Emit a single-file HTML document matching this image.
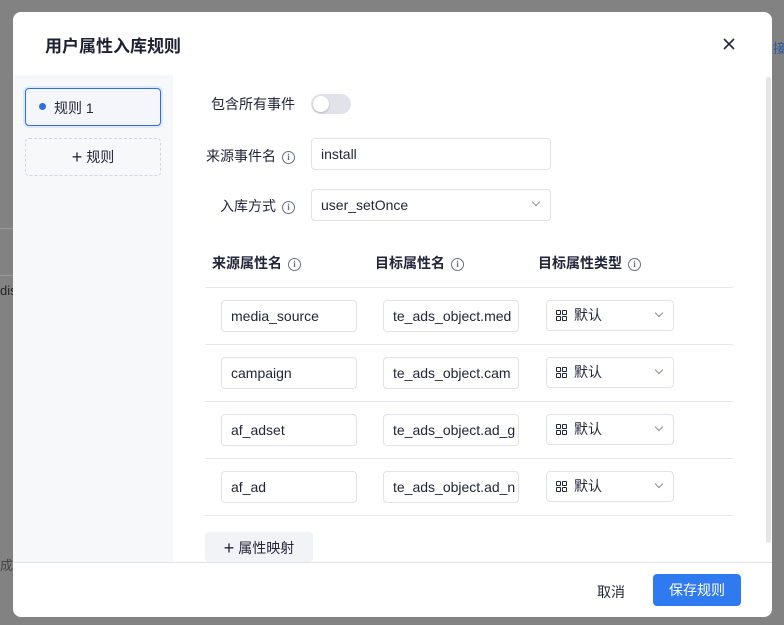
<!DOCTYPE html>
<html><head><meta charset="utf-8"><style>
*{box-sizing:border-box;margin:0;padding:0}
body{width:784px;height:625px;background:#828282;font-family:"Liberation Sans","Noto Sans CJK SC",sans-serif;position:relative;overflow:hidden;color:#23263a;font-size:14px}
.a{position:absolute}
.m{left:13px;top:12px;width:759px;height:605px;background:#fff;border-radius:8px;overflow:hidden}
.inp{position:absolute;border:1px solid #e2e3ea;border-radius:4px;background:#fff;height:32px;line-height:30px;padding-left:9px;font-size:14px;color:#23263a;white-space:nowrap;overflow:hidden}
.lbl{position:absolute;font-size:14px;color:#23263a;text-align:right}
.i{display:inline-block;width:13px;height:13px;border:1px solid #6b6e80;border-radius:50%;font-size:9px;line-height:11px;text-align:center;color:#6b6e80;vertical-align:1px;margin-left:6px;font-family:"Liberation Serif",serif;font-weight:bold}
.hr{position:absolute;left:205px;width:528px;height:1px;background:#e6e7ec}
.chev{position:absolute;right:11px;top:9px;width:6px;height:6px;border-right:1px solid #8a8d9c;border-bottom:1px solid #8a8d9c;transform:rotate(45deg)}
.grid{display:inline-block;width:11px;height:11px;margin-right:7px;vertical-align:-1px;position:relative}
.grid i{position:absolute;width:5px;height:5px;border:1.2px solid #23263a;border-radius:1px}
</style></head><body>
<div class="a" style="left:0;top:228px;width:13px;height:1px;background:#999"></div>
<div class="a" style="left:0;top:275px;width:13px;height:1px;background:#999"></div>
<div class="a" style="left:0;top:283px;font-size:13px;color:#222">dis</div>
<div class="a" style="left:0;top:555px;font-size:13px;color:#444">成</div>
<div class="a" style="left:773px;top:38px;font-size:13px;color:#2a5aa8">接</div>
<div class="a m">
 <div class="a" style="left:32px;top:20px;font-size:17px;font-weight:bold;color:#1d2033">用户属性入库规则</div>
 <svg class="a" style="left:710px;top:26px" width="12" height="12" viewBox="0 0 12 12"><path d="M1 1L11 11M11 1L1 11" stroke="#23263a" stroke-width="1.6"/></svg>
 <div class="a" style="left:0;top:63px;width:160px;height:487px;background:#f7f8fa"></div>
 <div class="a" style="left:12px;top:76px;width:136px;height:38px;border:1px solid #2f6fe0;border-radius:4px;background:#f4f6fb;box-shadow:0 0 0 2px #dfe8fa"></div>
 <div class="a" style="left:26px;top:91px;width:7px;height:7px;border-radius:50%;background:#2f6fe0"></div>
 <div class="a" style="left:41px;top:86px;font-size:14px">规则 1</div>
 <div class="a" style="left:12px;top:126px;width:136px;height:38px;border:1px dashed #d4d6de;border-radius:4px;text-align:center;line-height:36px;font-size:14px"><span style="font-size:18px;vertical-align:-1px">+</span> 规则</div>
 <div class="lbl" style="left:150px;top:82px;width:132px">包含所有事件</div>
 <div class="a" style="left:298px;top:82px;width:40px;height:20px;border-radius:10px;background:#e2e3ea"></div>
 <div class="a" style="left:300px;top:84px;width:16px;height:16px;border-radius:50%;background:#fff;box-shadow:0 1px 2px rgba(0,0,0,.2)"></div>
 <div class="lbl" style="left:150px;top:134px;width:132px">来源事件名<span class="i">i</span></div>
 <div class="inp" style="left:298px;top:126px;width:240px">install</div>
 <div class="lbl" style="left:150px;top:184px;width:132px">入库方式<span class="i">i</span></div>
 <div class="inp" style="left:298px;top:177px;width:240px">user_setOnce<span class="chev"></span></div>
 <div class="a" style="left:199px;top:241px;font-weight:bold;font-size:14px">来源属性名<span class="i">i</span></div>
 <div class="a" style="left:362px;top:241px;font-weight:bold;font-size:14px">目标属性名<span class="i">i</span></div>
 <div class="a" style="left:525px;top:241px;font-weight:bold;font-size:14px">目标属性类型<span class="i">i</span></div>
 <div class="hr" style="left:192px;top:275px"></div>
 <div class="inp" style="left:208px;top:288px;width:136px">media_source</div>
 <div class="inp" style="left:370px;top:288px;width:136px">te_ads_object.med</div>
 <div class="inp" style="left:533px;top:288px;width:128px;height:31px;line-height:29px"><span class="grid"><i style="left:0;top:0"></i><i style="left:6px;top:0"></i><i style="left:0;top:6px"></i><i style="left:6px;top:6px"></i></span>默认<span class="chev"></span></div>
 <div class="hr" style="left:192px;top:332px"></div>
 <div class="inp" style="left:208px;top:345px;width:136px">campaign</div>
 <div class="inp" style="left:370px;top:345px;width:136px">te_ads_object.cam</div>
 <div class="inp" style="left:533px;top:345px;width:128px;height:31px;line-height:29px"><span class="grid"><i style="left:0;top:0"></i><i style="left:6px;top:0"></i><i style="left:0;top:6px"></i><i style="left:6px;top:6px"></i></span>默认<span class="chev"></span></div>
 <div class="hr" style="left:192px;top:389px"></div>
 <div class="inp" style="left:208px;top:402px;width:136px">af_adset</div>
 <div class="inp" style="left:370px;top:402px;width:136px">te_ads_object.ad_g</div>
 <div class="inp" style="left:533px;top:402px;width:128px;height:31px;line-height:29px"><span class="grid"><i style="left:0;top:0"></i><i style="left:6px;top:0"></i><i style="left:0;top:6px"></i><i style="left:6px;top:6px"></i></span>默认<span class="chev"></span></div>
 <div class="hr" style="left:192px;top:446px"></div>
 <div class="inp" style="left:208px;top:459px;width:136px">af_ad</div>
 <div class="inp" style="left:370px;top:459px;width:136px">te_ads_object.ad_n</div>
 <div class="inp" style="left:533px;top:459px;width:128px;height:31px;line-height:29px"><span class="grid"><i style="left:0;top:0"></i><i style="left:6px;top:0"></i><i style="left:0;top:6px"></i><i style="left:6px;top:6px"></i></span>默认<span class="chev"></span></div>
 <div class="hr" style="left:192px;top:503px"></div>
 <div class="a" style="left:192px;top:520px;width:108px;height:30px;background:#f2f3f7;border-radius:4px;text-align:center;line-height:32px;font-size:14px"><span style="font-size:18px;vertical-align:-1px">+</span> 属性映射</div>
 <div class="a" style="left:753px;top:65px;width:5px;height:466px;background:#e6e6e6;border-radius:3px"></div>
 <div class="a" style="left:0;top:550px;width:759px;height:1px;background:#e2e3ea"></div>
 <div class="a" style="left:584px;top:570px;font-size:14px">取消</div>
 <div class="a" style="left:640px;top:562px;width:88px;height:32px;background:#2f7af0;border-radius:4px;color:#fff;text-align:center;line-height:32px;font-size:14px">保存规则</div>
</div>
</body></html>
